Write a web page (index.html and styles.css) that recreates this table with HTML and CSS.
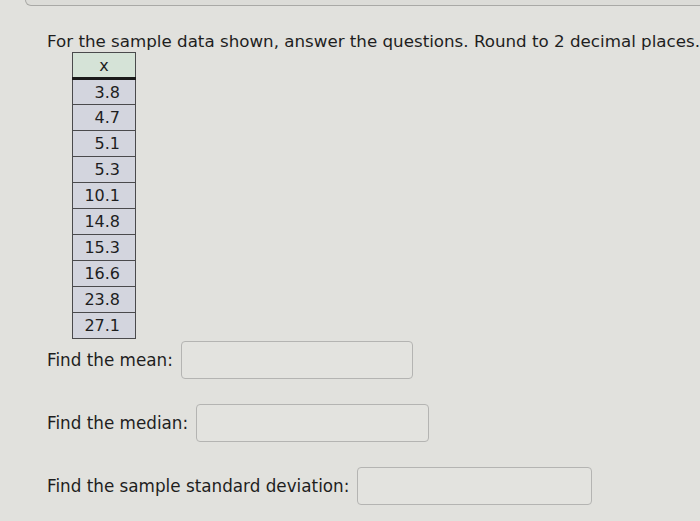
FILE: index.html
```html
<!DOCTYPE html>
<html>
<head>
<meta charset="utf-8">
<link rel="stylesheet" href="styles.css">
</head>
<body>
<div class="prev-card"></div>
<div class="content">
  <p class="title">For the sample data shown, answer the questions. Round to 2 decimal places.</p>
  <table class="data">
    <thead><tr><th>x</th></tr></thead>
    <tbody>
      <tr><td>3.8</td></tr>
      <tr><td>4.7</td></tr>
      <tr><td>5.1</td></tr>
      <tr><td>5.3</td></tr>
      <tr><td>10.1</td></tr>
      <tr><td>14.8</td></tr>
      <tr><td>15.3</td></tr>
      <tr><td>16.6</td></tr>
      <tr><td>23.8</td></tr>
      <tr><td>27.1</td></tr>
    </tbody>
  </table>
  <div class="q q-mean"><span>Find the mean:</span><input class="ans ans-mean" type="text"></div>
  <div class="q q-median"><span>Find the median:</span><input class="ans ans-median" type="text"></div>
  <div class="q q-sd"><span>Find the sample standard deviation:</span><input class="ans ans-sd" type="text"></div>
</div>
</body>
</html>
```
FILE: styles.css
```css
html, body {
  margin: 0;
  padding: 0;
}
body {
  background: #e1e1dd;
  font-family: "DejaVu Sans", Verdana, sans-serif;
  color: #1e1e1e;
  width: 700px;
  height: 521px;
  overflow: hidden;
}
.prev-card {
  height: 5px;
  margin-left: 25px;
  margin-right: -10px;
  border: 1px solid #a9a9a6;
  border-top: none;
  border-radius: 0 0 7px 7px;
  background: #dcdcd8;
}
.content {
  padding-left: 47px;
}
.title {
  margin: 24px 0 0 0;
  font-size: 16.7px;
  line-height: 22px;
  white-space: nowrap;
}
.data {
  margin-left: 25px;
  border-collapse: collapse;
  font-size: 16px;
}
.data th, .data td {
  border: 1.5px solid #4a4a4c;
  width: 63px;
  height: 26px;
  padding: 0;
  box-sizing: border-box;
}
.data th {
  background: #d5e3d7;
  font-weight: normal;
  text-align: center;
  border-bottom: 3px solid #1a1a1a;
}
.data td {
  background: #d3d5de;
  text-align: right;
  padding-right: 15px;
}
.q {
  display: flex;
  align-items: center;
  font-size: 16.8px;
}
.q span {
  margin-right: 8px;
}
.q-mean { margin-top: 2px; }
.q-median { margin-top: 25px; }
.q-sd { margin-top: 25px; }
.ans {
  height: 38px;
  box-sizing: border-box;
  border: 1.5px solid #b4b4b2;
  border-radius: 4px;
  background: #e3e3df;
  padding: 0;
}
.ans-mean { width: 232px; }
.ans-median { width: 233px; }
.ans-sd { width: 235px; }
```
